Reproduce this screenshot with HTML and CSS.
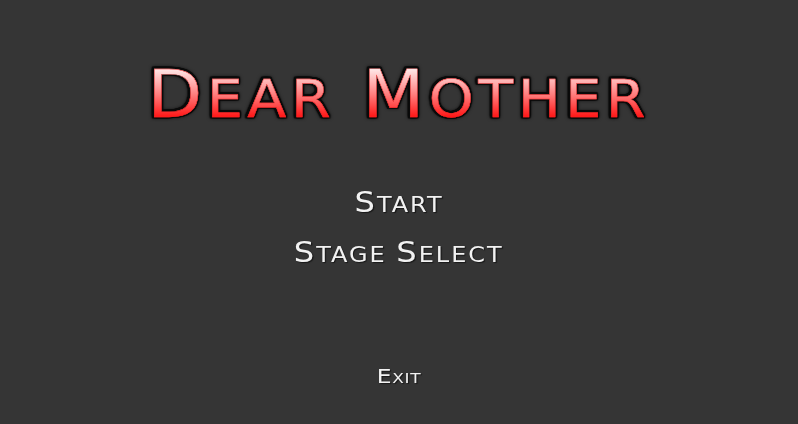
FILE: index.html
```html
<!DOCTYPE html>
<html>
<head>
<meta charset="utf-8">
<link rel="stylesheet" href="styles.css">
</head>
<body>
<main class="screen">
  <h1 class="title">D<span class="sc">EAR</span> M<span class="sc">OTHER</span></h1>
  <nav class="menu">
    <div class="item item-start"><span class="cap">S</span>TART</div>
    <div class="item item-stage"><span class="cap">S</span>TAGE <span class="cap">S</span>ELECT</div>
  </nav>
  <div class="exit"><span class="cap">E</span>XIT</div>
</main>
</body>
</html>
```
FILE: styles.css
```css
html, body {
  margin: 0;
  padding: 0;
  background: #353535;
}
.screen {
  width: 798px;
  height: 424px;
  display: flex;
  flex-direction: column;
  align-items: center;
  padding-top: 54.5px;
  box-sizing: border-box;
  font-family: "DejaVu Sans", "Liberation Sans", sans-serif;
  overflow: hidden;
}
.title {
  margin: 0;
  padding: 0 6px;
  flex: none;
  font-family: "DejaVu Sans", sans-serif;
  font-weight: normal;
  font-size: 65px;
  line-height: 80px;
  height: 80px;
  letter-spacing: 4.1px;
  white-space: nowrap;
  color: transparent;
  background: linear-gradient(180deg, #ffe4e4 0, #ffe4e4 15px, #ff8080 39px, #ff1414 62.5px, #ff1414 80px);
  -webkit-background-clip: text;
  background-clip: text;
  -webkit-text-stroke: 0.4px rgba(255, 40, 40, 0.9);
  transform: scaleX(1.1);
  filter:
    drop-shadow(1.4px 0 0 #0a0a0a)
    drop-shadow(-1.4px 0 0 #0a0a0a)
    drop-shadow(0 1.4px 0 #0a0a0a)
    drop-shadow(0 -1.4px 0 #0a0a0a)
    drop-shadow(0 0 1.5px rgba(0, 0, 0, 0.6));
}
.title .sc {
  font-size: 52px;
}
.menu {
  display: flex;
  flex-direction: column;
  align-items: center;
  margin-top: 51.5px;
  gap: 15px;
}
.item {
  font-size: 20.5px;
  line-height: 32px;
  color: #f2f2f2;
  letter-spacing: 1.7px;
  transform: scaleX(1.17);
  text-shadow: 1px 1px 1px rgba(0,0,0,0.55);
  white-space: nowrap;
}
.item .cap {
  font-size: 27.5px;
}
.exit {
  margin-top: 93px;
  font-size: 14.5px;
  line-height: 24px;
  color: #f2f2f2;
  letter-spacing: 0.6px;
  transform: scaleX(1.17);
  text-shadow: 1px 1px 1px rgba(0,0,0,0.55);
  white-space: nowrap;
}
.exit .cap {
  font-size: 20px;
}
```
